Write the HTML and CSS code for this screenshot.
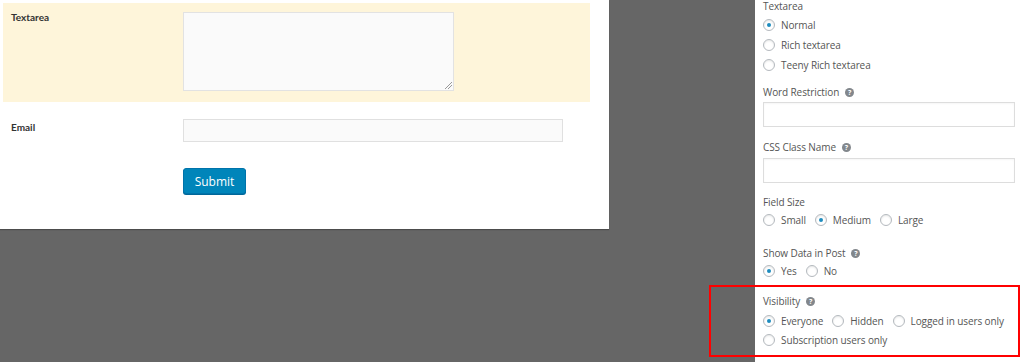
FILE: index.html
```html
<!DOCTYPE html>
<html>
<head>
<meta charset="utf-8">
<link rel="stylesheet" href="styles.css">
</head>
<body>
<div class="page">
  <div class="preview">
    <div class="row row-hl">
      <div class="row-label">Textarea</div>
      <div class="row-field"><div class="textarea"><span class="grip"></span></div></div>
    </div>
    <div class="row row-email">
      <div class="row-label">Email</div>
      <div class="row-field"><div class="text-input"></div></div>
    </div>
    <div class="row row-submit">
      <div class="row-label"></div>
      <div class="row-field"><button class="btn">Submit</button></div>
    </div>
  </div>
  <div class="gutter"></div>
  <div class="options">
    <div class="field f1">
      <div class="flabel">Textarea</div>
      <div class="radios col">
        <label class="ri"><span class="radio on"></span>Normal</label>
        <label class="ri"><span class="radio"></span>Rich textarea</label>
        <label class="ri"><span class="radio"></span>Teeny Rich textarea</label>
      </div>
    </div>
    <div class="field f2">
      <div class="flabel">Word Restriction <span class="help">?</span></div>
      <div class="opt-input"></div>
    </div>
    <div class="field f3">
      <div class="flabel">CSS Class Name <span class="help">?</span></div>
      <div class="opt-input"></div>
    </div>
    <div class="field f4">
      <div class="flabel">Field Size</div>
      <div class="radios">
        <label class="ri"><span class="radio"></span>Small</label>
        <label class="ri"><span class="radio on"></span>Medium</label>
        <label class="ri"><span class="radio"></span>Large</label>
      </div>
    </div>
    <div class="field f5">
      <div class="flabel">Show Data in Post <span class="help">?</span></div>
      <div class="radios">
        <label class="ri"><span class="radio on"></span>Yes</label>
        <label class="ri"><span class="radio"></span>No</label>
      </div>
    </div>
    <div class="field f6">
      <div class="flabel">Visibility <span class="help">?</span></div>
      <div class="radios">
        <label class="ri"><span class="radio on"></span>Everyone</label>
        <label class="ri"><span class="radio"></span>Hidden</label>
        <label class="ri"><span class="radio"></span>Logged in users only</label>
        <label class="ri"><span class="radio"></span>Subscription users only</label>
      </div>
    </div>
  </div>
  <div class="highlight-box"></div>
</div>
</body>
</html>
```

FILE: styles.css
```css
* { box-sizing: border-box; }
html, body { margin: 0; padding: 0; }
body {
  background: #666666;
  width: 1024px;
  height: 362px;
  overflow: hidden;
  font-family: "Open Sans", "Noto Sans", sans-serif;
}
.page {
  position: relative;
  display: grid;
  grid-template-columns: 609px 146px 1fr;
  height: 362px;
  align-items: start;
}
.preview {
  background: #fff;
  height: 229px;
  padding: 3px 19px 0 3px;
  box-shadow: 0 1px 1px rgba(0,0,0,0.25);
}
.row {
  display: flex;
}
.row-label {
  width: 180px;
  padding-left: 8px;
  font-family: "Lato", sans-serif;
  font-weight: bold;
  font-size: 10px;
  color: #333;
  line-height: 14px;
}
.row-hl {
  background: #fef5da;
  height: 99px;
  padding-top: 7px;
}
.textarea {
  position: relative;
  width: 271px;
  height: 79px;
  margin-top: 2px;
  background: #fafafa;
  border: 1px solid #e2e2e2;
}
.grip {
  position: absolute;
  right: 1px;
  bottom: 1px;
  width: 7px;
  height: 7px;
  background: linear-gradient(135deg, transparent 0 45%, #999 45% 52%, transparent 52% 68%, #999 68% 75%, transparent 75%);
}
.row-email {
  padding-top: 18px;
}
.text-input {
  width: 380px;
  height: 23px;
  margin-top: -1px;
  background: #fafafa;
  border: 1px solid #e0e0e0;
}
.row-submit {
  padding-top: 26px;
}
.btn {
  width: 63px;
  height: 26px;
  background: #0085ba;
  border: 1px solid #0073aa;
  border-radius: 3px;
  color: #fff;
  font-family: "Open Sans", sans-serif;
  font-size: 12px;
  padding: 0;
  box-shadow: 0 1px 0 #006799;
}
.gutter { height: 1px; }
.options {
  background: #fff;
  height: 362px;
  padding: 0 8px 0 8px;
  font-size: 10px;
  letter-spacing: -0.1px;
  color: #555;
}
.flabel {
  line-height: 14px;
  height: 14px;
  display: flex;
  align-items: center;
  white-space: nowrap;
}
.help {
  display: inline-flex;
  align-items: center;
  justify-content: center;
  width: 9px;
  height: 9px;
  margin-left: 6px;
  border-radius: 50%;
  background: #82878c;
  color: #fff;
  font-size: 7px;
  font-weight: bold;
  line-height: 1;
  letter-spacing: 0;
}
.f1 { margin-top: -1px; }
.f1 .radios { margin-top: 2px; }
.f2 { margin-top: 10px; }
.f3 { margin-top: 13px; }
.f4 { margin-top: 12px; }
.f5 { margin-top: 16px; }
.f6 { margin-top: 13px; }
.opt-input {
  height: 25px;
  margin-top: 3px;
  margin-right: 1px;
  border: 1px solid #dddddd;
  background: #fff;
  box-shadow: inset 0 1px 2px rgba(0,0,0,0.04);
}
.f3 .opt-input { margin-top: 4px; }
.radios {
  display: flex;
  flex-wrap: wrap;
  column-gap: 9px;
  margin-top: 1px;
}
.radios.col { flex-direction: column; }
.ri {
  display: flex;
  align-items: center;
  height: 20px;
  white-space: nowrap;
}
.f6 .ri { height: 19px; }
.f6 .radios { margin-top: 3px; }
.radio {
  position: relative;
  width: 12px;
  height: 12px;
  margin-right: 6px;
  border: 1px solid #b4b9be;
  border-radius: 50%;
  background: #fff;
  box-shadow: inset 0 1px 2px rgba(0,0,0,0.1);
  flex: none;
}
.radio.on::before {
  content: "";
  position: absolute;
  left: 3px;
  top: 3px;
  width: 4px;
  height: 4px;
  border-radius: 50%;
  background: #1e8cbe;
}
.highlight-box {
  position: absolute;
  left: 709px;
  top: 285px;
  width: 311px;
  height: 72px;
  border: 2px solid #ff0000;
}
```
